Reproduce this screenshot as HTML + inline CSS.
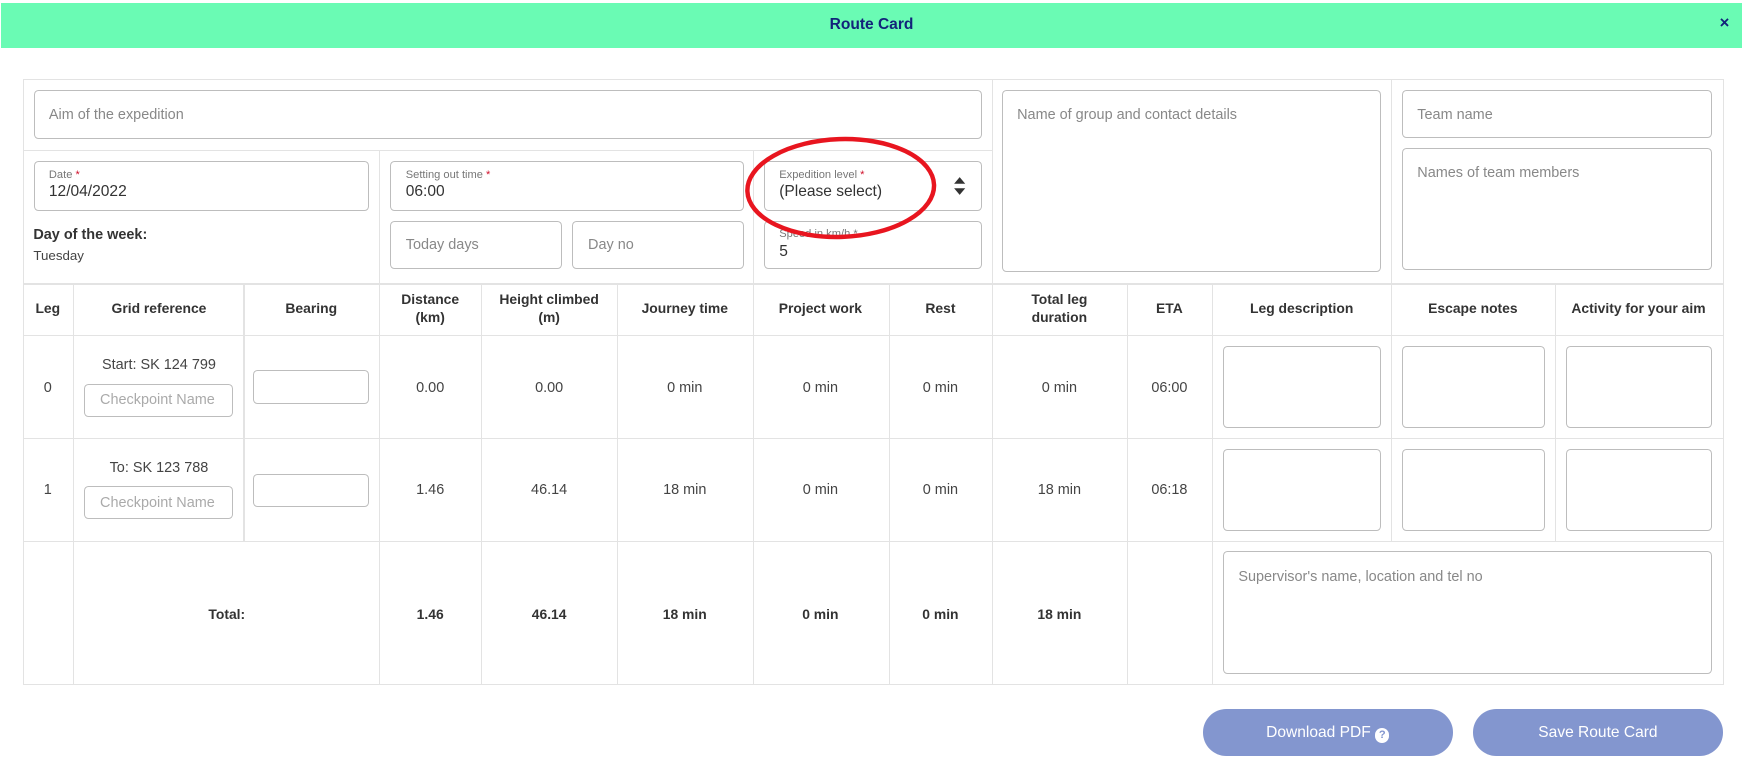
<!DOCTYPE html>
<html><head><meta charset="utf-8"><style>
html,body{margin:0;padding:0;background:#fff;}
body{width:1568px;height:688px;overflow:hidden;zoom:1.11161;position:relative;font-family:"Liberation Sans",sans-serif;color:#333;}
.a{position:absolute;}
.hdr{left:1px;top:3px;width:1566px;height:40px;background:#6afbb4;}
.hdr .t{position:absolute;left:0;right:0;top:11px;text-align:center;color:#12237a;font-weight:bold;font-size:14px;}
.hdr .x{position:absolute;left:1546px;top:9px;color:#12237a;font-weight:bold;font-size:15px;}
.box{position:absolute;border:1px solid #bdbdbd;border-radius:4px;box-sizing:border-box;background:#fff;}
.ph{position:absolute;color:#888;font-size:13px;}
.lb{position:absolute;color:#777;font-size:10px;}
.lb b{color:#d0102b;font-weight:normal;}
.val{position:absolute;color:#333;font-size:14px;}
.vl{position:absolute;width:1px;background:#e3e3e3;}
.hl{position:absolute;height:1px;background:#e3e3e3;}
.c{position:absolute;text-align:center;font-size:13px;color:#444;transform:translateX(-50%);white-space:nowrap;}
.h{font-weight:bold;color:#333;line-height:16px;font-size:12.5px;}
.btn{position:absolute;top:638px;height:42px;border-radius:21px;background:#8396cf;color:#fff;font-size:14px;text-align:center;line-height:44px;}
</style></head><body>
<div class="a hdr"><div class="t">Route Card</div><div class="x">×</div></div>

<div class="a" style="left:21px;top:71px;width:1528px;height:543px;border:1px solid #e3e3e3;"></div>
<div class="hl" style="left:21px;top:135px;width:871px"></div>
<div class="vl" style="left:892px;top:71px;height:184px"></div>
<div class="vl" style="left:1251px;top:71px;height:416px"></div>
<div class="vl" style="left:341px;top:135px;height:480px"></div>
<div class="vl" style="left:677px;top:135px;height:480px"></div>
<div class="hl" style="left:21px;top:255px;width:1529px"></div>
<div class="hl" style="left:21px;top:301px;width:1529px"></div>
<div class="hl" style="left:21px;top:394px;width:1529px"></div>
<div class="hl" style="left:21px;top:487px;width:1529px"></div>
<div class="vl" style="left:66px;top:255px;height:360px"></div>
<div class="vl" style="left:219px;top:255px;height:232px"></div>
<div class="vl" style="left:433px;top:255px;height:360px"></div>
<div class="vl" style="left:555px;top:255px;height:360px"></div>
<div class="vl" style="left:800px;top:255px;height:360px"></div>
<div class="vl" style="left:892px;top:255px;height:360px"></div>
<div class="vl" style="left:1014px;top:255px;height:360px"></div>
<div class="vl" style="left:1090px;top:255px;height:360px"></div>
<div class="vl" style="left:1399px;top:255px;height:232px"></div>

<div class="box" style="left:31px;top:81px;width:852px;height:44px"></div>
<div class="ph" style="left:44px;top:96px">Aim of the expedition</div>
<div class="box" style="left:31px;top:145px;width:301px;height:45px"></div>
<div class="lb" style="left:44px;top:152px">Date <b>*</b></div>
<div class="val" style="left:44px;top:165px">12/04/2022</div>
<div class="a" style="left:30px;top:204px;font-size:13px;font-weight:bold;color:#333">Day of the week:</div>
<div class="a" style="left:30px;top:223px;font-size:12px;color:#444">Tuesday</div>
<div class="box" style="left:351px;top:145px;width:318px;height:45px"></div>
<div class="lb" style="left:365px;top:152px">Setting out time <b>*</b></div>
<div class="val" style="left:365px;top:165px">06:00</div>
<div class="box" style="left:351px;top:199px;width:155px;height:43px"></div>
<div class="ph" style="left:365px;top:213px">Today days</div>
<div class="box" style="left:515px;top:199px;width:154px;height:43px"></div>
<div class="ph" style="left:529px;top:213px">Day no</div>
<div class="box" style="left:687px;top:145px;width:196px;height:45px"></div>
<div class="lb" style="left:701px;top:152px">Expedition level <b>*</b></div>
<div class="val" style="left:701px;top:165px">(Please select)</div>
<svg class="a" style="left:857px;top:158px" width="12" height="18" viewBox="0 0 12 18"><path d="M1 7 L6 1 L11 7Z M1 11 L6 17 L11 11Z" fill="#333"/></svg>
<div class="box" style="left:687px;top:199px;width:196px;height:43px"></div>
<div class="lb" style="left:701px;top:205px">Speed in km/h *</div>
<div class="val" style="left:701px;top:219px">5</div>
<div class="box" style="left:901px;top:81px;width:341px;height:164px"></div>
<div class="ph" style="left:915px;top:96px">Name of group and contact details</div>
<div class="box" style="left:1261px;top:81px;width:279px;height:43px"></div>
<div class="ph" style="left:1275px;top:96px">Team name</div>
<div class="box" style="left:1261px;top:133px;width:279px;height:110px"></div>
<div class="ph" style="left:1275px;top:148px">Names of team members</div>

<svg class="a" style="left:660px;top:115px" width="200" height="110"><ellipse cx="96" cy="54" rx="84" ry="44" fill="none" stroke="#e8151f" stroke-width="4" transform="rotate(-2 96 54)"/></svg>

<div class="c h" style="left:43px;top:270px">Leg</div>
<div class="c h" style="left:143px;top:270px">Grid reference</div>
<div class="c h" style="left:280px;top:270px">Bearing</div>
<div class="c h" style="left:387px;top:262px">Distance<br>(km)</div>
<div class="c h" style="left:494px;top:262px">Height climbed<br>(m)</div>
<div class="c h" style="left:616px;top:270px">Journey time</div>
<div class="c h" style="left:738px;top:270px">Project work</div>
<div class="c h" style="left:846px;top:270px">Rest</div>
<div class="c h" style="left:953px;top:262px">Total leg<br>duration</div>
<div class="c h" style="left:1052px;top:270px">ETA</div>
<div class="c h" style="left:1171px;top:270px">Leg description</div>
<div class="c h" style="left:1325px;top:270px">Escape notes</div>
<div class="c h" style="left:1474px;top:270px">Activity for your aim</div>

<div class="c" style="left:43px;top:342px">0</div>
<div class="c" style="left:143px;top:321px">Start: SK 124 799</div>
<div class="box" style="left:76px;top:345px;width:134px;height:30px"></div>
<div class="ph" style="left:90px;top:353px;width:112px;overflow:hidden;white-space:nowrap;color:#aaa">Checkpoint Name</div>
<div class="box" style="left:228px;top:333px;width:104px;height:30px"></div>
<div class="c" style="left:387px;top:342px">0.00</div>
<div class="c" style="left:494px;top:342px">0.00</div>
<div class="c" style="left:616px;top:342px">0 min</div>
<div class="c" style="left:738px;top:342px">0 min</div>
<div class="c" style="left:846px;top:342px">0 min</div>
<div class="c" style="left:953px;top:342px">0 min</div>
<div class="c" style="left:1052px;top:342px">06:00</div>
<div class="box" style="left:1100px;top:311px;width:142px;height:74px"></div>
<div class="box" style="left:1261px;top:311px;width:129px;height:74px"></div>
<div class="box" style="left:1409px;top:311px;width:131px;height:74px"></div>

<div class="c" style="left:43px;top:434px">1</div>
<div class="c" style="left:143px;top:414px">To: SK 123 788</div>
<div class="box" style="left:76px;top:437px;width:134px;height:30px"></div>
<div class="ph" style="left:90px;top:445px;width:112px;overflow:hidden;white-space:nowrap;color:#aaa">Checkpoint Name</div>
<div class="box" style="left:228px;top:426px;width:104px;height:30px"></div>
<div class="c" style="left:387px;top:434px">1.46</div>
<div class="c" style="left:494px;top:434px">46.14</div>
<div class="c" style="left:616px;top:434px">18 min</div>
<div class="c" style="left:738px;top:434px">0 min</div>
<div class="c" style="left:846px;top:434px">0 min</div>
<div class="c" style="left:953px;top:434px">18 min</div>
<div class="c" style="left:1052px;top:434px">06:18</div>
<div class="box" style="left:1100px;top:404px;width:142px;height:74px"></div>
<div class="box" style="left:1261px;top:404px;width:129px;height:74px"></div>
<div class="box" style="left:1409px;top:404px;width:131px;height:74px"></div>

<div class="c h" style="left:204px;top:545px">Total:</div>
<div class="c h" style="left:387px;top:545px">1.46</div>
<div class="c h" style="left:494px;top:545px">46.14</div>
<div class="c h" style="left:616px;top:545px">18 min</div>
<div class="c h" style="left:738px;top:545px">0 min</div>
<div class="c h" style="left:846px;top:545px">0 min</div>
<div class="c h" style="left:953px;top:545px">18 min</div>
<div class="box" style="left:1100px;top:496px;width:440px;height:110px"></div>
<div class="ph" style="left:1114px;top:512px">Supervisor's name, location and tel no</div>

<div class="btn" style="left:1082px;width:225px">Download PDF <span style="display:inline-block;width:13px;height:13px;border-radius:50%;background:#fff;color:#8396cf;font-size:10px;line-height:13px;font-weight:bold;vertical-align:-1px">?</span></div>
<div class="btn" style="left:1325px;width:225px">Save Route Card</div>
</body></html>
